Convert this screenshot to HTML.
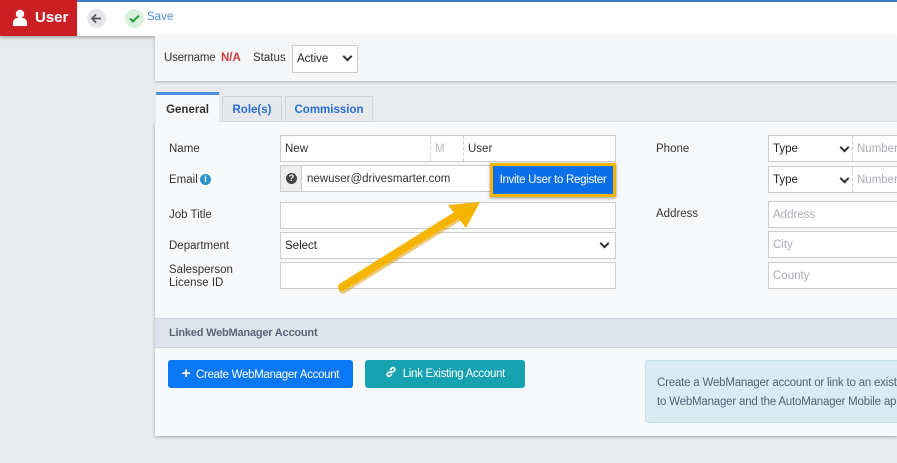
<!DOCTYPE html>
<html><head><style>
*{box-sizing:border-box;margin:0;padding:0}
body{width:897px;height:463px;overflow:hidden;background:#e8eaed;font-family:"Liberation Sans",sans-serif;font-size:11.5px;color:#333;position:relative}
.abs{position:absolute}
.top{left:0;top:0;width:897px;height:36px;background:#fff;border-top:2px solid #3a78c8;box-shadow:0 2px 3px rgba(0,0,0,.25)}
.red{left:0;top:0;width:77px;height:36px;background:#cc1f24;color:#fff;font-weight:bold;font-size:15px;line-height:36px;padding-left:35px}
.inp{background:#fff;border:1px solid #ccc;height:27px;line-height:27px;padding-left:4px;font-size:11.5px}
.ph{color:#aab}
.lbl{font-size:11.5px;color:#333}
.chev{position:absolute;right:6px;top:8px;width:7px;height:7px;border-right:2px solid #333;border-bottom:2px solid #333;transform:rotate(45deg)}
.btn{color:#fff;border-radius:3px;height:28px;line-height:28px;font-size:11.5px;text-align:center;letter-spacing:-.3px}
</style></head><body>
<div class="abs top"></div>
<div class="abs red">User</div>
<svg class="abs" style="left:12px;top:9px" width="16" height="17" viewBox="0 0 16 17"><circle cx="8" cy="5" r="4.2" fill="#fff"/><path d="M1 17v-3c0-3 2-5 4-5h6c2 0 4 2 4 5v3z" fill="#fff"/></svg>
<div class="abs" style="left:87px;top:9px;width:19px;height:19px;border-radius:50%;background:#e3e5e8"></div>
<svg class="abs" style="left:90px;top:12px" width="13" height="13" viewBox="0 0 13 13"><path d="M11 6.5H2.5M6 2.5L2 6.5l4 4" stroke="#555" stroke-width="1.8" fill="none"/></svg>
<div class="abs" style="left:125px;top:9px;width:19px;height:19px;border-radius:50%;background:#d8f0dc"></div>
<svg class="abs" style="left:128px;top:12px" width="13" height="13" viewBox="0 0 13 13"><path d="M2 6.5l3 3 6-6" stroke="#2a9d3e" stroke-width="2" fill="none"/></svg>
<div class="abs" style="left:147px;top:11px;color:#4a8fe0;font-size:11.5px">Save</div>

<div class="abs" style="left:155px;top:36px;width:742px;height:45px;background:#f5f6f8;box-shadow:0 1px 3px rgba(0,0,0,.25)"></div>
<div class="abs lbl" style="left:164px;top:52px;letter-spacing:-.2px">Username</div>
<div class="abs" style="left:221px;top:52px;color:#d23a3a;font-weight:bold">N/A</div>
<div class="abs lbl" style="left:253px;top:52px">Status</div>
<div class="abs inp" style="left:292px;top:45px;width:66px;height:28px;line-height:26px;color:#222">Active<span class="chev" style="top:7px"></span></div>

<div class="abs" style="left:155px;top:122px;width:742px;height:314px;background:#f7f8fa;box-shadow:0 1px 3px rgba(0,0,0,.3)"></div>
<div class="abs" style="left:156px;top:92px;width:63px;height:31px;background:#f7f8fa;border-top:3px solid #4a90d9;text-align:center;line-height:30px;font-weight:bold;color:#333">General</div>
<div class="abs" style="left:222px;top:96px;width:60px;height:26px;background:#e6e8ec;border:1px solid #d4d6da;text-align:center;line-height:27px;font-weight:bold;color:#2a6fd4">Role(s)</div>
<div class="abs" style="left:285px;top:96px;width:88px;height:26px;background:#e6e8ec;border:1px solid #d4d6da;text-align:center;line-height:27px;font-weight:bold;color:#2a6fd4">Commission</div>

<div class="abs lbl" style="left:169px;top:143px">Name</div>
<div class="abs inp" style="left:280px;top:135px;width:336px">New</div>
<div class="abs" style="left:430px;top:136px;height:25px;border-left:1px dashed #ccc;padding-left:4px;line-height:27px;color:#bbb">M</div>
<div class="abs" style="left:463px;top:136px;height:25px;border-left:1px dashed #ccc;padding-left:4px;line-height:27px">User</div>

<div class="abs lbl" style="left:169px;top:174px">Email</div>
<div class="abs" style="left:200px;top:174px;width:11px;height:11px;border-radius:50%;background:#2a93c8;color:#fff;font-size:9px;font-weight:bold;text-align:center;line-height:11px">i</div>
<div class="abs inp" style="left:280px;top:165px;width:336px;padding-left:26px">newuser@drivesmarter.com</div>
<div class="abs" style="left:281px;top:166px;width:21px;height:25px;background:#eceef0;border-right:1px solid #ccc"></div>
<div class="abs" style="left:286px;top:173px;width:11px;height:11px;border-radius:50%;background:#444;color:#fff;font-size:9px;font-weight:bold;text-align:center;line-height:11px">?</div>
<div class="abs" style="left:490px;top:163px;width:126px;height:34px;border:3px solid #f5b400;background:#0a6fe8;color:#fff;font-size:11.5px;letter-spacing:-.3px;line-height:29px;text-align:center;box-shadow:0 1px 3px rgba(0,0,0,.4)">Invite User to Register</div>

<div class="abs lbl" style="left:169px;top:209px">Job Title</div>
<div class="abs inp" style="left:280px;top:202px;width:336px"></div>
<div class="abs lbl" style="left:169px;top:240px">Department</div>
<div class="abs inp" style="left:280px;top:232px;width:336px;color:#222">Select<span class="chev" style="right:7px;top:7px"></span></div>
<div class="abs lbl" style="left:169px;top:264px;line-height:13px">Salesperson<br>License ID</div>
<div class="abs inp" style="left:280px;top:262px;width:336px"></div>

<div class="abs lbl" style="left:656px;top:143px">Phone</div>
<div class="abs inp" style="left:768px;top:135px;width:140px;color:#222">Type<span class="chev" style="left:72px;right:auto"></span></div>
<div class="abs ph" style="left:852px;top:136px;height:25px;border-left:1px dashed #ccc;padding-left:4px;line-height:27px">Number</div>
<div class="abs inp" style="left:768px;top:166px;width:140px;color:#222">Type<span class="chev" style="left:72px;right:auto"></span></div>
<div class="abs ph" style="left:852px;top:167px;height:25px;border-left:1px dashed #ccc;padding-left:4px;line-height:27px">Number</div>
<div class="abs lbl" style="left:656px;top:208px">Address</div>
<div class="abs inp ph" style="left:768px;top:201px;width:140px">Address</div>
<div class="abs inp ph" style="left:768px;top:231px;width:140px">City</div>
<div class="abs inp ph" style="left:768px;top:262px;width:140px">County</div>

<div class="abs" style="left:155px;top:318px;width:742px;height:30px;background:#dfe4ec;border-top:1px solid #cfd5de;border-bottom:1px solid #cfd5de;padding-left:14px;line-height:28px;font-weight:bold;color:#5a6577;font-size:11px;letter-spacing:-.2px">Linked WebManager Account</div>
<div class="abs btn" style="left:168px;top:360px;width:185px;background:#0a78f5"><b style="font-size:15px">+</b>&nbsp; Create WebManager Account</div>
<div class="abs btn" style="left:365px;top:360px;width:160px;background:#17a2b2"><svg width="12" height="12" viewBox="0 0 12 12" style="vertical-align:-1px"><path d="M5 7l2-2M4.5 5.5l-2 2a1.8 1.8 0 002.5 2.5l2-2M7.5 6.5l2-2A1.8 1.8 0 007 2L5 4" stroke="#fff" stroke-width="1.6" fill="none"/></svg>&nbsp; Link Existing Account</div>
<div class="abs" style="left:645px;top:360px;width:260px;height:63px;background:#d9ecf4;border:1px solid #c2e2ef;border-radius:3px;padding:13px 0 0 11px;color:#4e6677;font-size:11.5px;letter-spacing:-.2px;line-height:19px;white-space:nowrap">Create a WebManager account or link to an existing<br>to WebManager and the AutoManager Mobile app</div>

<svg class="abs" style="left:0;top:0" width="897" height="463"><path d="M342 287L462 212" stroke="#d99a00" stroke-width="9" stroke-linecap="round" opacity=".5" transform="translate(1,2)"/><path d="M342 287L462 212" stroke="#f5b400" stroke-width="8" stroke-linecap="round"/><path d="M480 202L448 205L466 228Z" fill="#f5b400"/></svg>
</body></html>
